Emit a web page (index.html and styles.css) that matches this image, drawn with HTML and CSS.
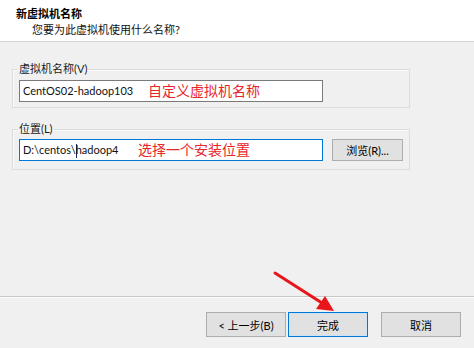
FILE: index.html
```html
<!DOCTYPE html>
<html lang="zh-CN">
<head>
  <meta charset="UTF-8" />
  <meta name="viewport" content="width=device-width, initial-scale=1.0"/>
  <title>新建虚拟机向导</title>
  <link rel="stylesheet" href="styles.css">
</head>
<body>

  <div class="header">
    <div class="title">新虚拟机名称</div>
    <div class="subtitle">您要为此虚拟机使用什么名称?</div>
  </div>

  <div class="main">
    <fieldset class="group group-name">
      <legend>虚拟机名称(V)</legend>
      <div class="field-row">
        <div class="textbox">
          CentOS02-hadoop103
          <span class="note note-name">自定义虚拟机名称</span>
        </div>
      </div>
    </fieldset>

    <fieldset class="group group-path">
      <legend>位置(L)</legend>
      <div class="field-row">
        <div class="textbox focused">
          D:\centos\<span class="caret"></span>hadoop4
          <span class="note note-path">选择一个安装位置</span>
        </div>
        <button class="btn btn-browse">浏览(R)...</button>
      </div>
    </fieldset>
  </div>

  <div class="footer">
    <button class="btn">&lt; 上一步(B)</button>
    <button class="btn btn-default">完成</button>
    <button class="btn btn-cancel">取消</button>
  </div>

  <!-- annotation arrow pointing at the finish button -->
  <svg class="arrow" width="474" height="348" viewBox="0 0 474 348">
    <line x1="275" y1="273" x2="322" y2="303" stroke="#e8161b" stroke-width="3" stroke-linecap="round"/>
    <polygon points="334,311 316,309 325,296" fill="#e8161b"/>
  </svg>

</body>
</html>
```

FILE: styles.css
```css
html, body {
  margin: 0;
  padding: 0;
}

body {
  width: 474px;
  height: 348px;
  display: flex;
  flex-direction: column;
  background: #f0f0f0;
  font-family: Lato, "Noto Sans CJK SC", sans-serif;
  font-size: 11px;
  color: #000;
  position: relative;
  overflow: hidden;
}

.header {
  height: 41px;
  background: #fff;
  border-bottom: 1px solid #d5d5d5;
  box-sizing: content-box;
}

.title {
  font-weight: bold;
  line-height: 16px;
  padding: 6px 0 0 16px;
}

.subtitle {
  line-height: 16px;
  padding-left: 32px;
  color: #111;
}

.main {
  flex: 1;
  padding: 19px 64px 0 12px;
}

.group {
  margin: 0;
  padding: 3px 6px 5px 6px;
  border: 1px solid #dcdcdc;
  box-shadow: inset 1px 1px 0 #fafafa;
}

.group legend {
  padding: 0 1px;
  margin-left: -1px;
  line-height: 16px;
  color: #1a1a1a;
}

.group-path {
  margin-top: 13px;
  padding-top: 2px;
  padding-bottom: 8px;
}

.field-row {
  display: flex;
  align-items: center;
}

.textbox {
  position: relative;
  width: 304px;
  height: 22px;
  box-sizing: border-box;
  border: 1px solid #7a7a7a;
  background: #fff;
  padding: 0 3px;
  line-height: 20px;
  font-size: 11px;
  color: #111;
  white-space: nowrap;
}

.textbox.focused {
  border-color: #0078d7;
}

.caret {
  display: inline-block;
  width: 1px;
  height: 14px;
  background: #1a2a6a;
  vertical-align: middle;
  margin: 0 -1px 0 0;
}

.note {
  position: absolute;
  top: 0;
  color: #e8262a;
  font-size: 14px;
  line-height: 20px;
}

.note-name {
  left: 128px;
}

.note-path {
  left: 118px;
}

.btn {
  font-family: inherit;
  font-size: 11px;
  color: #000;
  background: #e1e1e1;
  border: 1px solid #adadad;
  padding: 0;
  height: 25px;
  width: 80px;
}

.btn-browse {
  width: 71px;
  height: 22px;
  margin-left: 9px;
}

.btn-default {
  border-color: #0078d7;
  box-shadow: inset 0 0 0 1px #cde3f5;
}

.footer {
  height: 36px;
  border-top: 1px solid #c8c8c8;
  box-shadow: inset 0 1px 0 #fcfcfc;
  padding: 15px 13px 0 0;
  display: flex;
  justify-content: flex-end;
  align-items: flex-start;
  gap: 2px;
}

.btn-cancel {
  margin-left: 11px;
}

.arrow {
  position: absolute;
  left: 0;
  top: 0;
  pointer-events: none;
}
```
